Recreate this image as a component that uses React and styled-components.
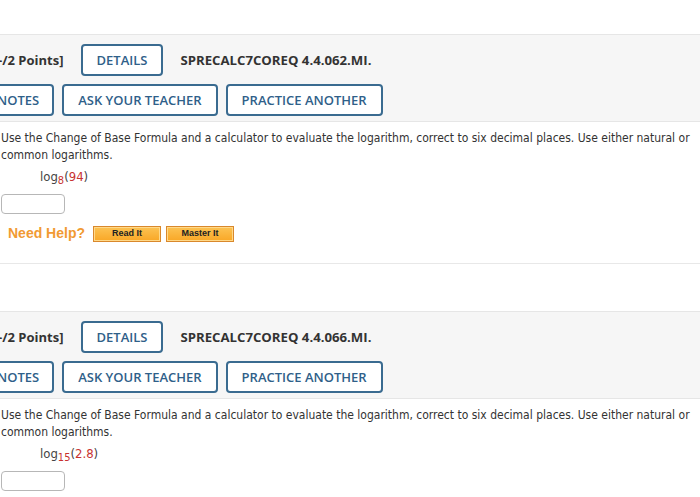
import React from 'react';
import styled, { createGlobalStyle } from 'styled-components';

const GlobalStyle = createGlobalStyle`
  body {
    margin: 0;
    background: #fff;
    overflow: hidden;
    font-family: 'Open Sans', 'Liberation Sans', sans-serif;
  }
`;

const Page = styled.div`
  width: 700px;
  padding-top: 34px;
`;

const Question = styled.section`
  border-bottom: 1px solid #e8e8e8;
  margin-bottom: 47px;
`;

const Header = styled.div`
  background: #f6f6f6;
  border-top: 1px solid #e6e6e6;
  border-bottom: 1px solid #e6e6e6;
  padding: 9px 0 5px;
  display: flex;
  flex-direction: column;
  gap: 8px;
`;

const Row = styled.div`
  display: flex;
  align-items: center;
  gap: ${(p) => p.gap || 8}px;
`;

const Points = styled.span`
  font-size: 13px;
  font-weight: 700;
  color: #333;
  margin-left: -2px;
`;

const Code = styled.span`
  font-size: 13.2px;
  font-weight: 700;
  color: #333;
`;

const Button = styled.button`
  height: 32px;
  box-sizing: border-box;
  padding: 0 ${(p) => p.pad || 14}px;
  margin-left: ${(p) => p.shift || 0}px;
  background: #fff;
  border: 2px solid #3a6b90;
  border-radius: 4px;
  font-family: 'Open Sans', 'Liberation Sans', sans-serif;
  font-size: 13px;
  font-weight: 600;
  color: #2f6089;
  white-space: nowrap;
`;

const Body = styled.div`
  padding: 8px 0 21px 1px;
  font-family: 'DejaVu Sans Condensed', 'DejaVu Sans', sans-serif;
  font-size: 12px;
  line-height: 17px;
  color: #333;
`;

const Formula = styled.div`
  margin: 2px 0 0 39px;
  font-size: 13px;
  line-height: 22px;
  color: #444;
  sub {
    font-size: 11px;
    vertical-align: -3px;
    line-height: 0;
  }
`;

const Red = styled.span`
  color: #c8322f;
`;

const Answer = styled.div`
  width: 64px;
  height: 20px;
  box-sizing: border-box;
  margin-top: 6px;
  border: 1px solid #b7b7b7;
  border-radius: 4px;
  background: #fff;
`;

const Help = styled.div`
  display: flex;
  align-items: center;
  margin: 11px 0 0 7px;
`;

const HelpLabel = styled.span`
  font-family: 'Liberation Sans', Arial, sans-serif;
  font-size: 14px;
  font-weight: 700;
  color: #f19a33;
  margin-right: 8px;
`;

const HelpButton = styled.span`
  width: 68px;
  height: 16px;
  box-sizing: border-box;
  margin-right: 5px;
  display: flex;
  align-items: center;
  justify-content: center;
  background: linear-gradient(#fcc354, #f9a726);
  border: 1px solid #d9882c;
  box-shadow: inset 0 0 0 1px #ffd98a;
  font-family: 'Liberation Sans', Arial, sans-serif;
  font-size: 9px;
  font-weight: 700;
  color: #222;
`;

const questions = [
  { code: 'SPRECALC7COREQ 4.4.062.MI.', base: '8', arg: '94', help: true },
  { code: 'SPRECALC7COREQ 4.4.066.MI.', base: '15', arg: '2.8', help: false },
];

const App = () => (
  <Page>
    <GlobalStyle />
    {questions.map((q) => (
      <Question key={q.code}>
        <Header>
          <Row gap={17}>
            <Points>-/2 Points]</Points>
            <Button>DETAILS</Button>
            <Code>{q.code}</Code>
          </Row>
          <Row>
            <Button shift={-18} pad={13}>NOTES</Button>
            <Button>ASK YOUR TEACHER</Button>
            <Button>PRACTICE ANOTHER</Button>
          </Row>
        </Header>
        <Body>
          Use the Change of Base Formula and a calculator to evaluate the logarithm, correct to six decimal places. Use either natural or common logarithms.
          <Formula>
            log<sub><Red>{q.base}</Red></sub>(<Red>{q.arg}</Red>)
          </Formula>
          <Answer />
          {q.help && (
            <Help>
              <HelpLabel>Need Help?</HelpLabel>
              <HelpButton>Read It</HelpButton>
              <HelpButton>Master It</HelpButton>
            </Help>
          )}
        </Body>
      </Question>
    ))}
  </Page>
);

export default App;
